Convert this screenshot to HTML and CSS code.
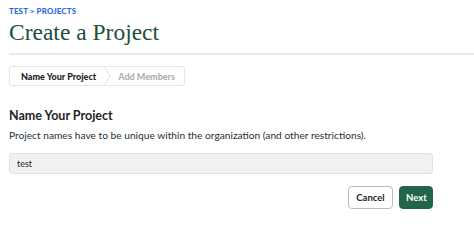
FILE: index.html
```html
<!DOCTYPE html>
<html lang="en">
<head>
    <meta charset="UTF-8">
    <meta name="viewport" content="width=device-width, initial-scale=1.0">
    <title>Create a Project</title>
    <link rel="stylesheet" href="styles.css">
</head>
<body>
    <div class="page">
        <div class="crumbs">TEST &gt; PROJECTS</div>
        <h1 class="title">Create a Project</h1>
        <div class="divider"></div>

        <div class="steps">
            <div class="step active">Name Your Project</div>
            <svg class="chevron" width="8" height="20" viewBox="0 0 8 20">
                <path d="M1 0 L7 10 L1 20" fill="none" stroke="#e3e3e3" stroke-width="1"/>
            </svg>
            <div class="step">Add Members</div>
        </div>

        <h2 class="section">Name Your Project</h2>
        <p class="help">Project names have to be unique within the organization (and other restrictions).</p>

        <div class="field">
            <input type="text" class="name-input" value="test">
        </div>

        <div class="actions">
            <button class="btn cancel">Cancel</button>
            <button class="btn next">Next</button>
        </div>
    </div>
</body>
</html>
```

FILE: styles.css
```css
body {
    margin: 0;
    background: #ffffff;
    font-family: "Lato", "Open Sans", sans-serif;
    color: #21272a;
}
.page {
    padding: 7px 0 0 9px;
}
.crumbs {
    font-size: 8px;
    font-weight: 900;
    color: #2f6be0;
    letter-spacing: 0.1px;
    line-height: 9px;
}
.title {
    margin: 2px 0 0 0;
    font-family: "Liberation Serif", "DejaVu Serif", serif;
    font-weight: normal;
    font-size: 23.5px;
    line-height: 28px;
    color: #1e4e3c;
}
.divider {
    margin-top: 7px;
    height: 2px;
    background: #e9e9e9;
}
.steps {
    margin-top: 11px;
    display: inline-flex;
    align-items: center;
    height: 18px;
    border: 1px solid #e6e6e6;
    border-radius: 2px;
    padding: 0 9px 0 11px;
    font-size: 9px;
    font-weight: 900;
}
.step {
    color: #aeb1b3;
}
.step.active {
    color: #1f2326;
}
.chevron {
    margin: 0 7px 0 7px;
    display: block;
}
.section {
    margin: 22px 0 0 0;
    font-size: 12.5px;
    font-weight: 700;
    line-height: 16px;
    color: #1f2326;
}
.help {
    margin: 5px 0 0 0;
    font-size: 10.2px;
    line-height: 13px;
    color: #2a2f33;
}
.field {
    margin-top: 9px;
    width: 424px;
}
.name-input {
    box-sizing: border-box;
    width: 100%;
    height: 21px;
    padding: 0 7px;
    border: 1px solid #e2e2e2;
    border-radius: 3px;
    background: #f1f1f1;
    font-family: "Lato", "Open Sans", sans-serif;
    font-size: 9px;
    color: #21272a;
    outline: none;
}
.actions {
    margin-top: 12px;
    width: 424px;
    display: flex;
    justify-content: flex-end;
    gap: 6px;
}
.btn {
    height: 23px;
    border-radius: 4px;
    font-family: "Lato", "Open Sans", sans-serif;
    font-size: 9.5px;
    font-weight: 700;
    cursor: pointer;
}
.cancel {
    width: 45px;
    background: #ffffff;
    border: 1px solid #b8bcbe;
    color: #1f2326;
}
.next {
    width: 34px;
    background: #23654a;
    border: 1px solid #23654a;
    color: #ffffff;
}
```
